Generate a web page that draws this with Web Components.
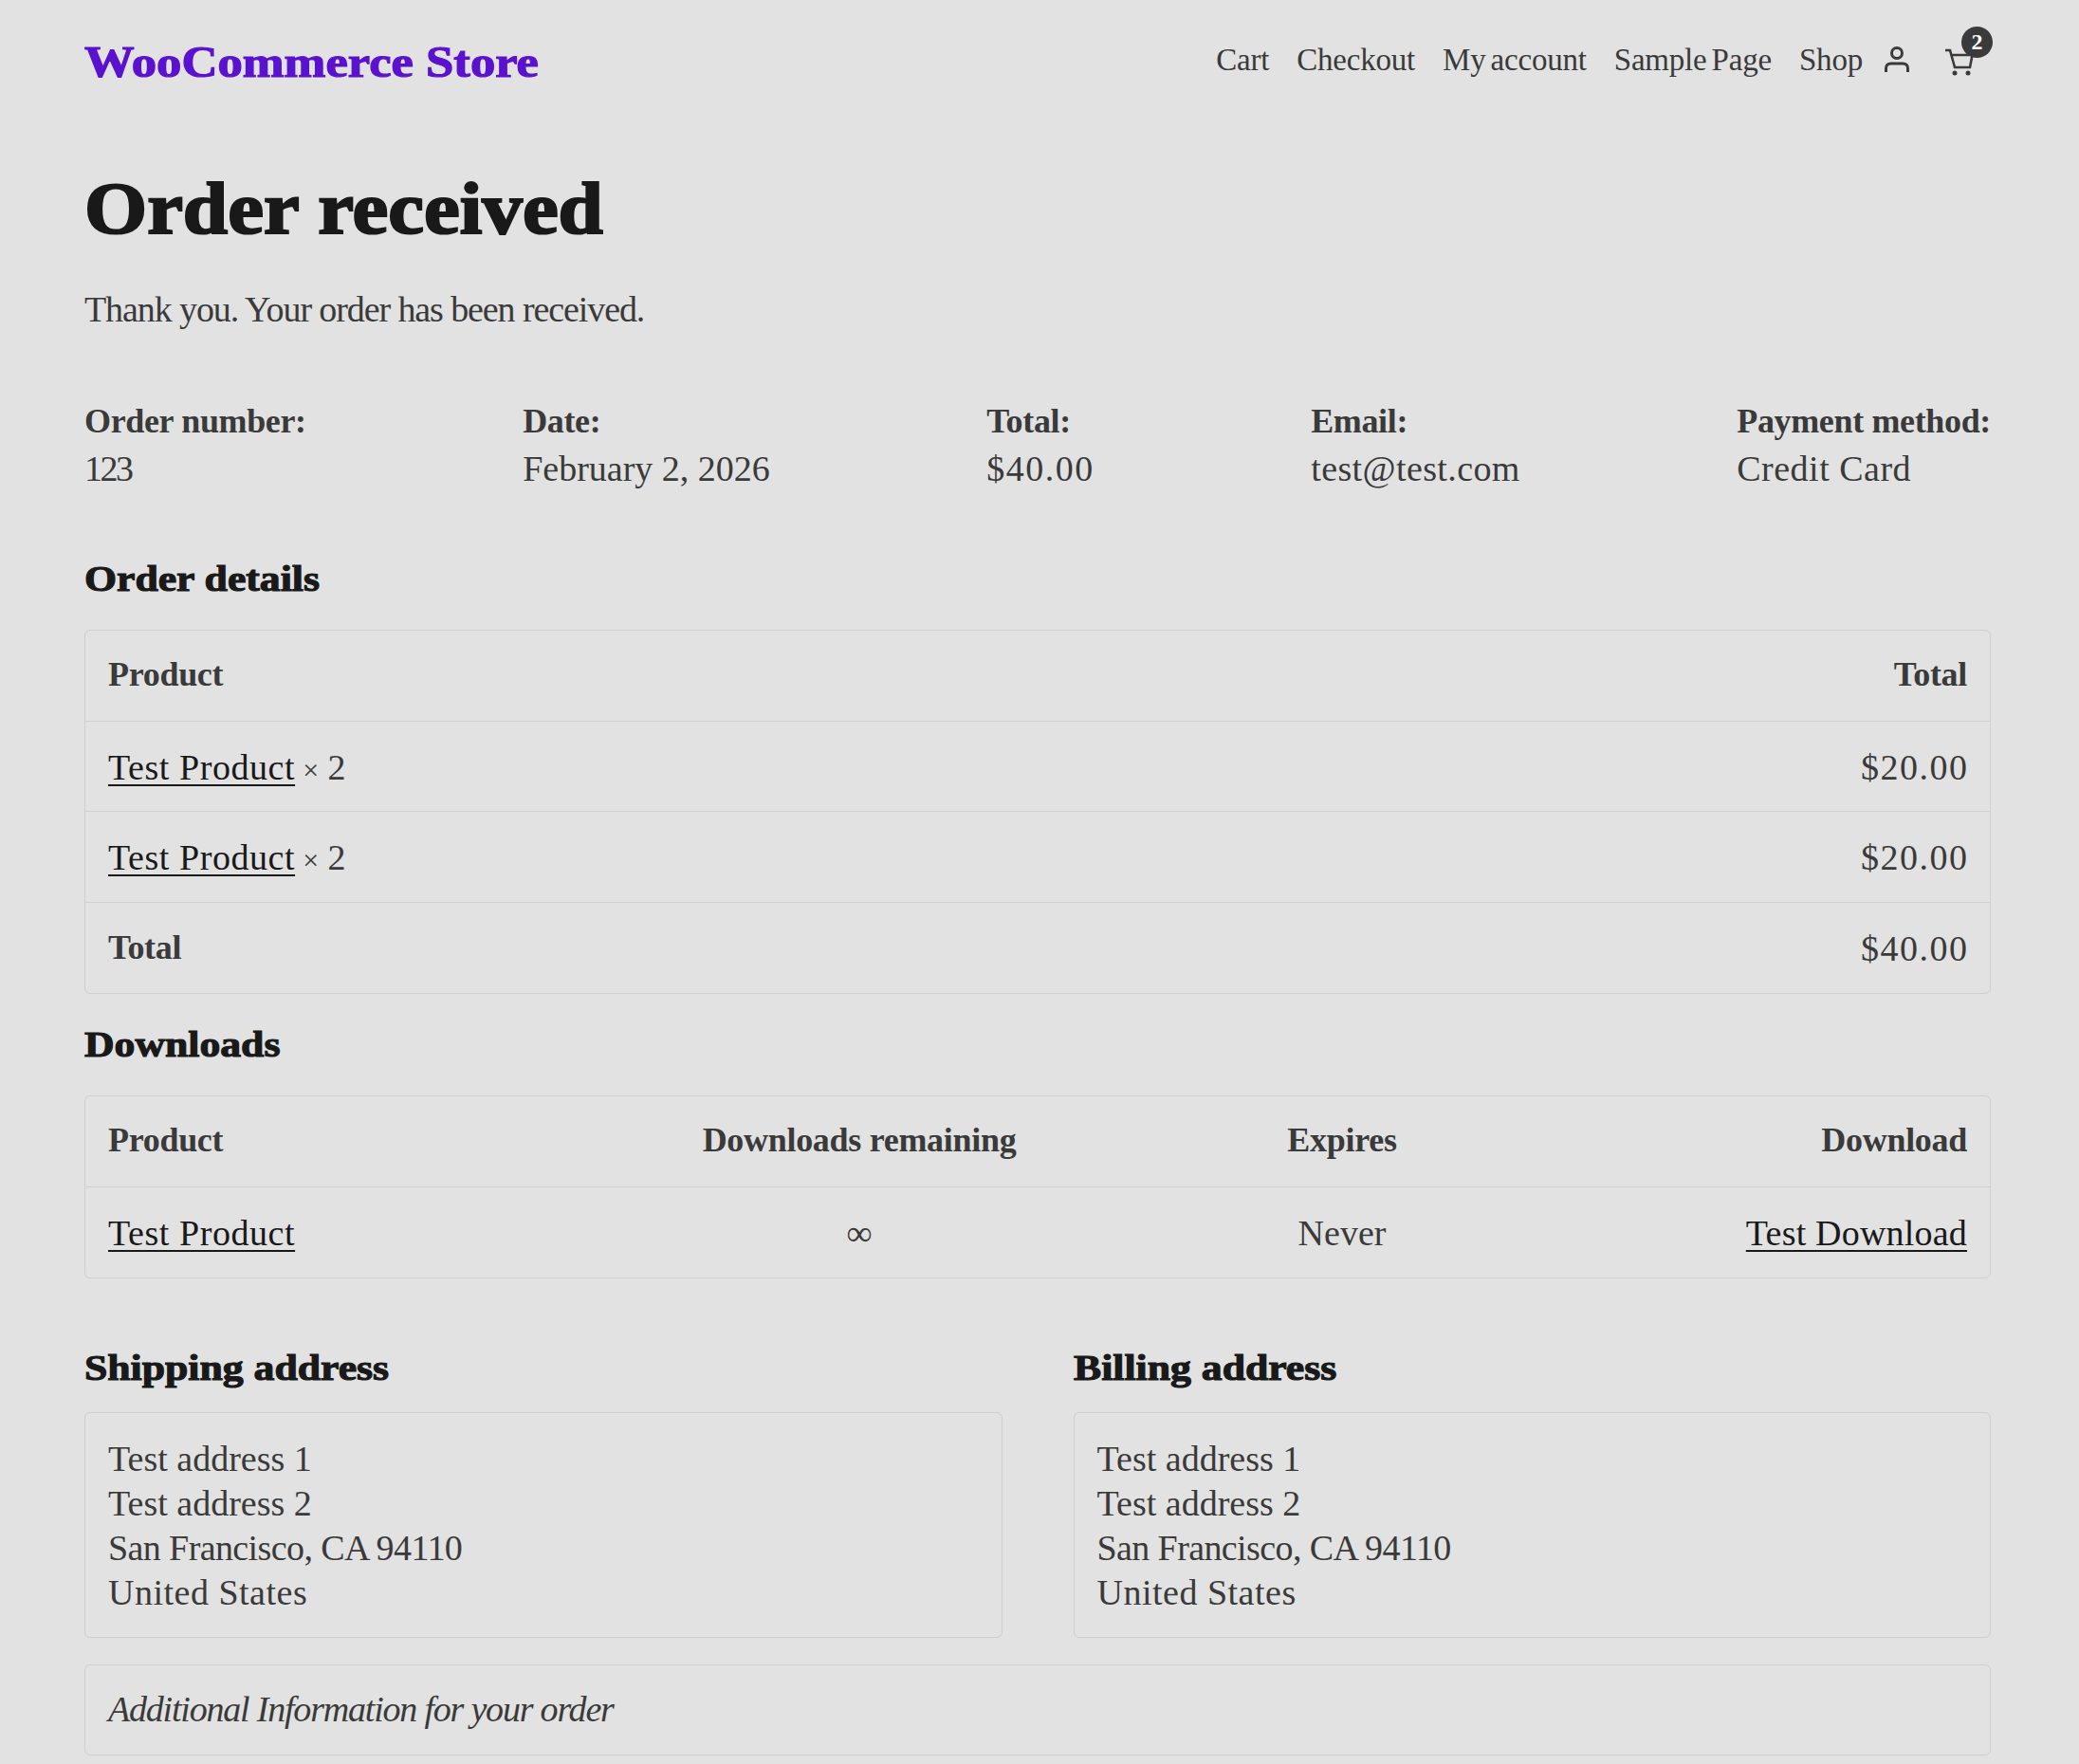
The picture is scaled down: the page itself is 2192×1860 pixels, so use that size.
<!DOCTYPE html>
<html lang="en">
<head>
<meta charset="utf-8">
<title>Order received</title>
<style>
	html, body { margin: 0; background: #e2e2e2; }
	body { font-family: "Liberation Serif", serif; font-size: 38px; line-height: 47px; color: #3a3a3a; height: 1860px; overflow: hidden; }
	.money { text-align: right; letter-spacing: 1.5px; margin-right: -1.5px; }
</style>
</head>
<body>
<order-page>
	<site-header slot="header"></site-header>
	<page-title>Order received</page-title>
	<thank-note>Thank you. Your order has been received.</thank-note>
	<order-overview>
		<overview-item label="Order number:"><span style="letter-spacing:-2.5px">123</span></overview-item>
		<overview-item label="Date:">February 2, 2026</overview-item>
		<overview-item label="Total:"><span style="letter-spacing:1.5px">$40.00</span></overview-item>
		<overview-item label="Email:"><span style="letter-spacing:.4px">test@test.com</span></overview-item>
		<overview-item label="Payment method:"><span style="letter-spacing:.5px">Credit Card</span></overview-item>
	</order-overview>

	<section-title style="margin-top:67px">Order details</section-title>
	<data-table style="margin-top:30px">
		<table-row columns="1fr 1fr" head><span>Product</span><span style="text-align:right">Total</span></table-row>
		<table-row columns="1fr 1fr"><span><text-link>Test Product</text-link> <small-qty><i>×</i> 2</small-qty></span><span class="money">$20.00</span></table-row>
		<table-row columns="1fr 1fr"><span><text-link>Test Product</text-link> <small-qty><i>×</i> 2</small-qty></span><span class="money">$20.00</span></table-row>
		<table-row columns="1fr 1fr"><b style="margin-top:-1px;font-size:36px;letter-spacing:-.3px">Total</b><span class="money">$40.00</span></table-row>
	</data-table>

	<section-title style="margin-top:29px">Downloads</section-title>
	<data-table style="margin-top:30px">
		<table-row columns="603fr 378fr 640fr 339fr" head><span>Product</span><span style="text-align:center">Downloads remaining</span><span style="text-align:center">Expires</span><span style="text-align:right">Download</span></table-row>
		<table-row columns="603fr 378fr 640fr 339fr"><span><text-link>Test Product</text-link></span><span style="text-align:center">∞</span><span style="text-align:center">Never</span><span style="text-align:right"><text-link style="letter-spacing:.2px">Test Download</text-link></span></table-row>
	</data-table>

	<address-pair>
		<address-card heading="Shipping address">Test address 1<br>Test address 2<br><span style="letter-spacing:-.6px">San Francisco, CA 94110</span><br><span style="letter-spacing:.5px">United States</span></address-card>
		<address-card heading="Billing address">Test address 1<br>Test address 2<br><span style="letter-spacing:-.6px">San Francisco, CA 94110</span><br><span style="letter-spacing:.5px">United States</span></address-card>
	</address-pair>
	<note-box>Additional Information for your order</note-box>
</order-page>

<script>
	// small helper, every element gets the same open shadow root setup
	class Base extends HTMLElement {
		constructor(html) {
			super()
			let template = document.createElement('template')
			template.innerHTML = html
			this.attachShadow({ mode: 'open' }).appendChild(template.content.cloneNode(true))
		}
	}

	class OrderPage extends Base {
		constructor() {
			super(`
				<style>
					:host { display: block; padding: 0 93px 0 89px; }
				</style>
				<slot name="header"></slot>
				<slot></slot>
			`)
		}
	}

	class SiteHeader extends Base {
		constructor() {
			super(`
				<style>
					:host { display: flex; justify-content: space-between; align-items: center; height: 131px; }
					.title { font-size: 47px; font-weight: bold; color: #5a12ce; -webkit-text-stroke: 1.2px #5a12ce; transform: scaleX(1.12); transform-origin: left center; }
					nav { display: flex; align-items: center; font-size: 33px; letter-spacing: -.2px; word-spacing: -3px; margin-top: -4px; }
					nav a { margin-right: 29px; color: inherit; text-decoration: none; }
					nav a:last-of-type { margin-right: 0; }
					.user { margin-left: 16px; margin-top: -2px; width: 40px; height: 40px; display: block; }
					.cart { position: relative; margin-left: 27px; width: 54px; height: 40px; margin-right: -2px; }
					.cart svg { display: block; width: 40px; height: 40px; }
					.badge { position: absolute; left: 21px; top: -16px; width: 33px; height: 33px; border-radius: 50%; background: #3a3a3a; color: #fff; font-size: 24px; line-height: 33px; font-weight: bold; text-align: center; }
				</style>
				<div class="title">WooCommerce Store</div>
				<nav>
					<a href="#">Cart</a>
					<a href="#">Checkout</a>
					<a href="#">My account</a>
					<a href="#">Sample Page</a>
					<a href="#">Shop</a>
					<svg class="user" viewBox="0 0 40 40" fill="none" stroke="#3a3a3a" stroke-width="3">
						<circle cx="20" cy="13" r="5.5"/>
						<path d="M8.500 33v-4c0-3 2-5 5-5h13c3 0 5 2 5 5v4"/>
					</svg>
					<div class="cart">
						<svg viewBox="0 0 40 40" fill="none" stroke="#3a3a3a" stroke-width="2.6">
							<path d="M4 9h5l5 18h16l2.500-13h-21"/>
							<circle cx="14" cy="33" r="2.500" fill="#3a3a3a" stroke="none"/>
							<circle cx="28" cy="33" r="2.500" fill="#3a3a3a" stroke="none"/>
						</svg>
						<div class="badge">2</div>
					</div>
				</nav>
			`)
		}
	}

	class PageTitle extends Base {
		constructor() {
			super(`
				<style>
					:host { display: block; font-size: 78px; line-height: 88px; font-weight: bold; color: #191919; -webkit-text-stroke: 2.2px #191919; margin-top: 45px; }
					span { display: inline-block; transform: scaleX(1.09); transform-origin: left center; }
				</style>
				<span><slot></slot></span>
			`)
		}
	}

	class ThankNote extends Base {
		constructor() {
			super(`
				<style>
					:host { display: block; margin-top: 39px; letter-spacing: -1.1px; }
				</style>
				<slot></slot>
			`)
		}
	}

	class OrderOverview extends Base {
		constructor() {
			super(`
				<style>
					:host { display: flex; justify-content: space-between; margin-top: 69px; }
				</style>
				<slot></slot>
			`)
		}
	}

	class OverviewItem extends Base {
		constructor() {
			super(`
				<style>
					:host { display: block; line-height: 50px; }
					b { display: block; font-size: 36px; letter-spacing: -.35px; }
				</style>
				<b></b>
				<slot></slot>
			`)
			this.shadowRoot.querySelector('b').textContent = this.getAttribute('label')
		}
	}

	class SectionTitle extends Base {
		constructor() {
			super(`
				<style>
					:host { display: block; font-size: 38px; line-height: 48px; font-weight: bold; color: #191919; -webkit-text-stroke: 1.1px #191919; }
					span { display: inline-block; transform: scaleX(1.15); transform-origin: left center; }
				</style>
				<span><slot></slot></span>
			`)
		}
	}

	class DataTable extends Base {
		constructor() {
			super(`
				<style>
					:host { display: block; border: 1px solid #cfcfcf; border-radius: 6px; }
					::slotted(table-row:not(:last-child)) { border-bottom: 1px solid #cfcfcf; }
				</style>
				<slot></slot>
			`)
		}
	}

	class TableRow extends Base {
		constructor() {
			super(`
				<style>
					:host { display: grid; box-sizing: border-box; height: 95.500px; padding: 25px 24px 23px; align-items: start; grid-template-columns: var(--cols); }
					:host([head]) { padding-top: 23px; font-weight: bold; font-size: 36px; letter-spacing: -.3px; }
				</style>
				<slot></slot>
			`)
			this.style.setProperty('--cols', this.getAttribute('columns'))
		}
	}

	class TextLink extends Base {
		constructor() {
			super(`
				<style>
					:host { letter-spacing: .55px; }
					a { color: #191919; text-decoration: underline; text-decoration-thickness: 2px; text-underline-offset: 5px; }
				</style>
				<a href="#"><slot></slot></a>
			`)
		}
	}

	class SmallQty extends Base {
		constructor() {
			super(`
				<style>
					:host { display: inline; margin-left: -2px; }
					::slotted(i) { font-style: normal; font-size: 30px; }
				</style>
				<slot></slot>
			`)
		}
	}

	class AddressPair extends Base {
		constructor() {
			super(`
				<style>
					:host { display: grid; grid-template-columns: 1fr 1fr; gap: 75px; margin-top: 70px; }
				</style>
				<slot></slot>
			`)
		}
	}

	class AddressCard extends Base {
		constructor() {
			super(`
				<style>
					:host { display: block; }
					.box { box-sizing: border-box; height: 238px; margin-top: 23px; padding: 25px 24px 22px; border: 1px solid #cfcfcf; border-radius: 6px; }
				</style>
				<section-title></section-title>
				<div class="box"><slot></slot></div>
			`)
			this.shadowRoot.querySelector('section-title').textContent = this.getAttribute('heading')
		}
	}

	class NoteBox extends Base {
		constructor() {
			super(`
				<style>
					:host { display: block; box-sizing: border-box; height: 96px; margin-top: 28px; padding: 23px 24px; border: 1px solid #cfcfcf; border-radius: 6px; font-style: italic; letter-spacing: -1.2px; }
				</style>
				<slot></slot>
			`)
		}
	}

	customElements.define('order-page', OrderPage)
	customElements.define('site-header', SiteHeader)
	customElements.define('page-title', PageTitle)
	customElements.define('thank-note', ThankNote)
	customElements.define('order-overview', OrderOverview)
	customElements.define('overview-item', OverviewItem)
	customElements.define('section-title', SectionTitle)
	customElements.define('data-table', DataTable)
	customElements.define('table-row', TableRow)
	customElements.define('text-link', TextLink)
	customElements.define('small-qty', SmallQty)
	customElements.define('address-pair', AddressPair)
	customElements.define('address-card', AddressCard)
	customElements.define('note-box', NoteBox)
</script>
</body>
</html>
